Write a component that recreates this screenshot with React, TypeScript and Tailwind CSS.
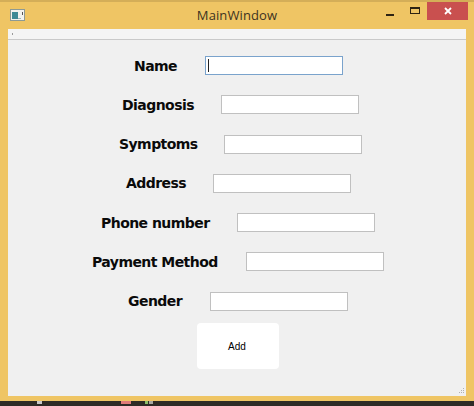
const fields = [
  { label: "Name", labelClass: "w-[205px] pl-[134px]" , inputClass: "border-[#7aa3cc]", focused: true },
  { label: "Diagnosis", labelClass: "w-[221px] pl-[122px]", inputClass: "border-[#c0c0c0]" },
  { label: "Symptoms", labelClass: "w-[224px] pl-[119px]", inputClass: "border-[#c0c0c0]" },
  { label: "Address", labelClass: "w-[213px] pl-[126px]", inputClass: "border-[#c0c0c0]" },
  { label: "Phone number", labelClass: "w-[237px] pl-[101px]", inputClass: "border-[#c0c0c0]" },
  { label: "Payment Method", labelClass: "w-[246px] pl-[92px]", inputClass: "border-[#c0c0c0]" },
  { label: "Gender", labelClass: "w-[210px] pl-[128px]", inputClass: "border-[#c0c0c0]" },
];

function AppIcon() {
  return (
    <svg width="16" height="13" viewBox="0 0 16 13">
      <rect x="0.5" y="0.5" width="14" height="11" fill="#f2f2ee" stroke="#8d9a94" />
      <rect x="2" y="3" width="6" height="7" fill="#3d8a96" />
      <rect x="8" y="9" width="3" height="1" fill="#9fb6bb" />
      <rect x="12" y="3" width="1" height="3" fill="#555" />
    </svg>
  );
}

export default function App() {
  return (
    <div className="w-[474px] h-[406px] overflow-hidden flex flex-col bg-[#efc564] font-['Liberation_Sans',sans-serif]">
      <div className="h-[2px] bg-[#d4ae58]" />
      {/* title bar */}
      <div className="h-[27px] flex items-center relative">
        <div className="ml-[10px] mt-[-1px]">
          <AppIcon />
        </div>
        <span className="absolute left-0 right-0 top-[4px] text-center text-[13px] leading-[18px] tracking-[0.1px] text-[#3d3322] font-['Open_Sans',sans-serif]">
          MainWindow
        </span>
        <div className="ml-auto mr-[6px] mt-[-9px] flex items-center">
          <div className="mt-[8px] w-[8px] h-[2px] bg-[#2e2412]" />
          <div className="ml-[16px] mt-[-1px] w-[10px] h-[7px] border border-[#2e2412] border-t-2" />
          <div className="ml-[7px] w-[41px] h-[18px] bg-[#c9504f] flex items-center justify-center">
            <svg width="8" height="8" viewBox="0 0 8 8">
              <path d="M1 1 L7 7 M7 1 L1 7" stroke="#ffffff" strokeWidth="1.8" />
            </svg>
          </div>
        </div>
      </div>
      {/* client area */}
      <div className="mx-[8px] h-[367px] flex flex-col bg-[#f0f0f0] relative">
        <div className="h-[11px] bg-[#f4f4f4] border-b border-[#c9c9c9] flex-none">
          <div className="ml-[4px] mt-[4px] w-[1px] h-[2px] bg-[#9a9a9a]" />
        </div>
        <div className="flex flex-col gap-[20.3px] pt-[16px] ml-[-8px]">
          {fields.map((f) => (
            <div key={f.label} className="flex items-center h-[19px]">
              <label
                className={`${f.labelClass} flex-none text-[14px] leading-[18px] font-bold text-[#0a0a0a] whitespace-nowrap font-['DejaVu_Sans',sans-serif] tracking-[-0.55px]`}
              >
                {f.label}
              </label>
              <div
                className={`${f.inputClass} w-[138px] h-[19px] flex items-center flex-none border bg-white`}
              >
                {f.focused && <span className="ml-[2px] w-[1px] h-[13px] bg-[#222]" />}
              </div>
            </div>
          ))}
        </div>
        <button className="ml-[189px] mt-[12px] w-[82px] h-[46px] rounded-[4px] bg-white text-[10px] pt-[2px] pr-[2px] text-black flex-none">
          Add
        </button>
        <svg className="absolute right-[1px] bottom-[1px]" width="8" height="8" viewBox="0 0 8 8">
          <path d="M6 1h1v1H6zM4 3h1v1H4zM6 3h1v1H6zM2 5h1v1H2zM4 5h1v1H4zM6 5h1v1H6z" fill="#b0b0b0" />
        </svg>
      </div>
      <div className="h-[5px] flex-none" />
      {/* taskbar strip behind the window */}
      <div className="flex-1 bg-[#2e2b26] flex items-start">
        <div className="ml-[37px] w-[5px] h-[3px] bg-[#c8c8c8]" />
        <div className="ml-[79px] w-[10px] h-[3px] bg-[#e07a78]" />
        <div className="ml-[14px] w-[3px] h-[3px] bg-[#8abf6a]" />
        <div className="ml-[1px] w-[4px] h-[3px] bg-[#a8a8a0]" />
      </div>
    </div>
  );
}
